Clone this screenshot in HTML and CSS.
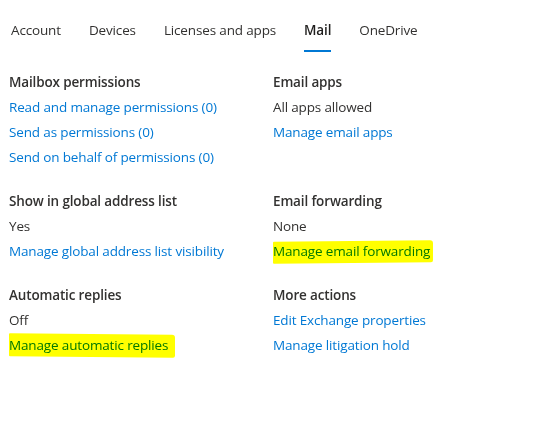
FILE: index.html
```html
<!DOCTYPE html>
<html lang="en">
<head>
<meta charset="utf-8">
<title>Mail</title>
<link rel="stylesheet" href="styles.css">
</head>
<body>
<nav class="tabs">
  <span class="tab">Account</span>
  <span class="tab">Devices</span>
  <span class="tab">Licenses and apps</span>
  <span class="tab active">Mail</span>
  <span class="tab">OneDrive</span>
</nav>
<main class="grid">
  <section class="group">
    <h3 class="head">Mailbox permissions</h3>
    <a class="link">Read and manage permissions (0)</a>
    <a class="link">Send as permissions (0)</a>
    <a class="link">Send on behalf of permissions (0)</a>
  </section>
  <section class="group">
    <h3 class="head">Email apps</h3>
    <span class="value">All apps allowed</span>
    <a class="link">Manage email apps</a>
  </section>
  <section class="group">
    <h3 class="head">Show in global address list</h3>
    <span class="value">Yes</span>
    <a class="link">Manage global address list visibility</a>
  </section>
  <section class="group">
    <h3 class="head">Email forwarding</h3>
    <span class="value">None</span>
    <a class="link"><span class="marker">Manage email forwarding</span></a>
  </section>
  <section class="group">
    <h3 class="head">Automatic replies</h3>
    <span class="value">Off</span>
    <a class="link"><span class="marker marker-wavy">Manage automatic replies</span></a>
  </section>
  <section class="group">
    <h3 class="head">More actions</h3>
    <a class="link">Edit Exchange properties</a>
    <a class="link">Manage litigation hold</a>
  </section>
</main>
</body>
</html>
```

FILE: styles.css
```css
html, body {
  margin: 0;
  padding: 0;
  background: #ffffff;
}

body {
  font-family: "Open Sans", "Noto Sans", sans-serif;
  font-size: 13.5px;
  letter-spacing: -0.15px;
  color: #323130;
}

.tabs {
  display: flex;
  gap: 28px;
  margin-top: 12px;
  padding-left: 11px;
}

.tab {
  line-height: 20px;
  padding: 8px 0 10px;
  color: #323130;
  border-bottom: 2px solid transparent;
}

.tab.wide {
  letter-spacing: -0.4px;
}

.tab.active {
  font-weight: 600;
  color: #201f1e;
  border-bottom-color: #0078d4;
}

.grid {
  display: grid;
  grid-template-columns: 264px 1fr;
  row-gap: 19px;
  margin-top: 18px;
  padding-left: 9px;
}

.group {
  display: flex;
  flex-direction: column;
  align-items: flex-start;
}

.head {
  margin: 0;
  font-size: 13.5px;
  font-weight: 600;
  line-height: 25px;
  color: #323130;
}

.value,
.link {
  line-height: 25px;
}

.link {
  color: #0078d4;
  text-decoration: none;
  cursor: pointer;
}

.marker {
  position: relative;
  display: inline-block;
}

.marker::before {
  content: "";
  position: absolute;
  left: 0;
  right: -3px;
  top: 2px;
  bottom: 1px;
  background: #ffff00;
  mix-blend-mode: multiply;
  border-radius: 1px 3px 2px 1px;
  transform: skewY(-0.6deg);
}

.marker-wavy::before {
  top: 1px;
  right: -7px;
  transform: skewY(0.5deg);
}
```
